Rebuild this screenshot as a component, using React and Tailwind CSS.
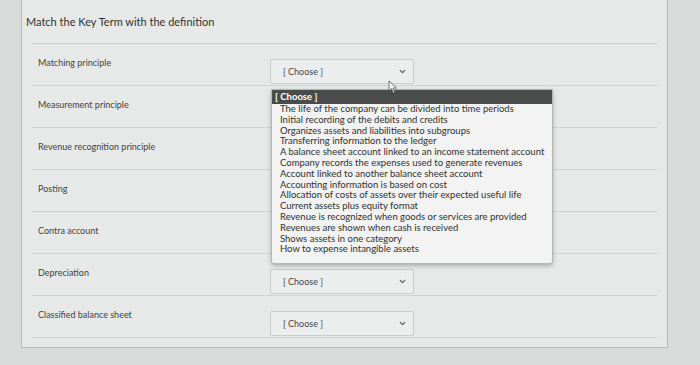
import { ChevronDown } from 'lucide-react';

const terms = [
  'Matching principle',
  'Measurement principle',
  'Revenue recognition principle',
  'Posting',
  'Contra account',
  'Depreciation',
  'Classified balance sheet',
];

const options = [
  'The life of the company can be divided into time periods',
  'Initial recording of the debits and credits',
  'Organizes assets and liabilities into subgroups',
  'Transferring information to the ledger',
  'A balance sheet account linked to an income statement account',
  'Company records the expenses used to generate revenues',
  'Account linked to another balance sheet account',
  'Accounting information is based on cost',
  'Allocation of costs of assets over their expected useful life',
  'Current assets plus equity format',
  'Revenue is recognized when goods or services are provided',
  'Revenues are shown when cash is received',
  'Shows assets in one category',
  'How to expense intangible assets',
];

function SelectBox({ hidden }) {
  return (
    <div className={`w-[144px] h-[25px] border border-[#c9cccb] bg-[#eceeed] rounded-[2px] flex items-center justify-between pl-[12px] pr-[6px] ${hidden ? 'invisible' : ''}`}>
      <span className="text-[9px] text-[#444]">[ Choose ]</span>
      <ChevronDown size={9} strokeWidth={3.2} className="text-[#555]" />
    </div>
  );
}

export default function App() {
  return (
    <div className="relative w-[700px] h-[365px] overflow-hidden bg-[#d9dbda] font-['Lato','Open_Sans',sans-serif] text-[#3b3d3d]">
      {/* card */}
      <div className="ml-[21px] mr-[32px] h-[348px] bg-[#e7e9e8] border-x border-b border-[#b5b8b7]">
        <div className="pt-[14px] pl-[4px] h-[43px] text-[11px] text-[#2f3131]">
          Match the Key Term with the definition
        </div>
        <div className="mx-[10px] border-t border-[#d0d3d2]">
          {terms.map((t, i) => (
            <div key={t} className="h-[42px] border-b border-[#d0d3d2] grid grid-cols-[238px_1fr]">
              <div className="pt-[12px] pl-[6px] text-[9px] text-[#3f4141]">{t}</div>
              <div className="pt-[15px]">
                <SelectBox hidden={i > 0 && i < 5} />
              </div>
            </div>
          ))}
        </div>
      </div>

      {/* open dropdown */}
      <div className="absolute left-[271px] top-[89px] w-[282px] bg-[#f2f3f2] border border-[#b4b7b6] rounded-b-[3px] shadow-[0_2px_4px_rgba(0,0,0,0.25)] pb-[8px]">
        <div className="h-[14px] bg-[#4a4b4b] text-white font-bold text-[9.5px] leading-[14px] pl-[3px]">[ Choose ]</div>
        {options.map((o) => (
          <div key={o} className="pl-[8px] text-[9.5px] leading-[10.8px] text-[#2f3131] whitespace-nowrap">{o}</div>
        ))}
      </div>

      {/* mouse cursor */}
      <svg className="absolute left-[388px] top-[80px]" width="10" height="14" viewBox="0 0 10 14">
        <path d="M1 1 L1 11 L3.5 8.5 L5.5 13 L7 12.3 L5 8 L8.5 8 Z" fill="#f5f5f5" stroke="#555" strokeWidth="0.8" />
      </svg>
    </div>
  );
}
